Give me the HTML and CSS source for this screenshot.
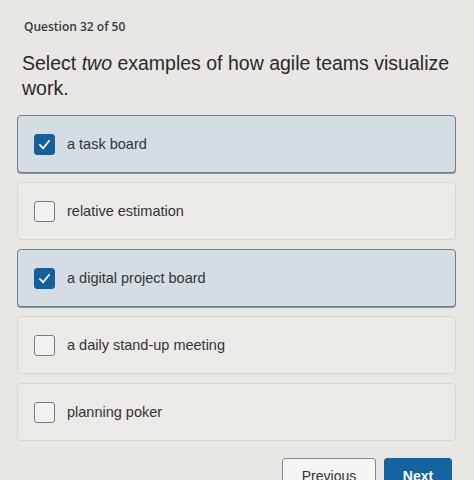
FILE: index.html
```html
<!DOCTYPE html>
<html>
<head>
<meta charset="utf-8">
<link rel="stylesheet" href="styles.css">
</head>
<body>
<div class="page">
  <div class="counter">Question 32 of 50</div>
  <h1 class="question">Select <em>two</em> examples of how agile teams visualize work.</h1>
  <div class="options">
    <label class="option selected"><span class="box"><svg viewBox="0 0 20 20" width="20" height="20"><path d="M4.5 10.5 L8.5 14.5 L15.5 5.5" fill="none" stroke="#fff" stroke-width="2" stroke-linecap="round" stroke-linejoin="round"/></svg></span><span class="label">a task board</span></label>
    <label class="option"><span class="box"></span><span class="label">relative estimation</span></label>
    <label class="option selected"><span class="box"><svg viewBox="0 0 20 20" width="20" height="20"><path d="M4.5 10.5 L8.5 14.5 L15.5 5.5" fill="none" stroke="#fff" stroke-width="2" stroke-linecap="round" stroke-linejoin="round"/></svg></span><span class="label">a digital project board</span></label>
    <label class="option"><span class="box"></span><span class="label">a daily stand-up meeting</span></label>
    <label class="option"><span class="box"></span><span class="label">planning poker</span></label>
  </div>
  <div class="nav">
    <button class="btn prev">Previous</button>
    <button class="btn next">Next</button>
  </div>
</div>
</body>
</html>
```
FILE: styles.css
```css
html, body {
  margin: 0;
  padding: 0;
}
body {
  background: #e8e7e4;
  font-family: "Liberation Sans", Arial, sans-serif;
  color: #2e2e2e;
  overflow: hidden;
}
.page {
  padding: 19px 18px 0 17px;
}
.counter {
  font-family: "Open Sans", sans-serif;
  font-size: 12px;
  font-weight: 600;
  color: #3a3a3a;
  margin-left: 7px;
  line-height: 16px;
}
.question {
  font-size: 19.5px;
  font-weight: normal;
  line-height: 25px;
  margin: 16px 0 0 5px;
  color: #2a2a2a;
}
.question em {
  font-style: italic;
}
.options {
  display: flex;
  flex-direction: column;
  gap: 9px;
  margin-top: 14px;
}
.option {
  display: flex;
  align-items: center;
  gap: 12px;
  height: 56px;
  padding: 0 16px;
  border: 1px solid #d6d4d0;
  border-radius: 4px;
  background: #ebeae7;
  font-size: 14.5px;
  color: #333;
}
.option.selected {
  background: #d3dde3;
  border-color: #6f7e88;
  box-shadow: 0 1px 0 #8a969e;
}
.box {
  width: 19px;
  height: 19px;
  border: 1.5px solid #7a7a7a;
  border-radius: 3px;
  background: #f2f1ef;
  display: flex;
  align-items: center;
  justify-content: center;
  flex: none;
}
.selected .box {
  background: #15609a;
  border-color: #15609a;
}
.box svg {
  width: 17px;
  height: 17px;
}
.nav {
  display: flex;
  justify-content: flex-end;
  gap: 8px;
  margin-top: 17px;
  padding-right: 4px;
}
.btn {
  font-family: "Liberation Sans", Arial, sans-serif;
  font-size: 14px;
  height: 36px;
  border-radius: 3px;
  padding: 0 16px;
}
.prev {
  background: #f5f5f4;
  border: 1px solid #8a8a8a;
  color: #333;
  width: 94px;
}
.next {
  background: #1463a0;
  border: 1px solid #1463a0;
  color: #fff;
  font-weight: bold;
  width: 68px;
}
```
